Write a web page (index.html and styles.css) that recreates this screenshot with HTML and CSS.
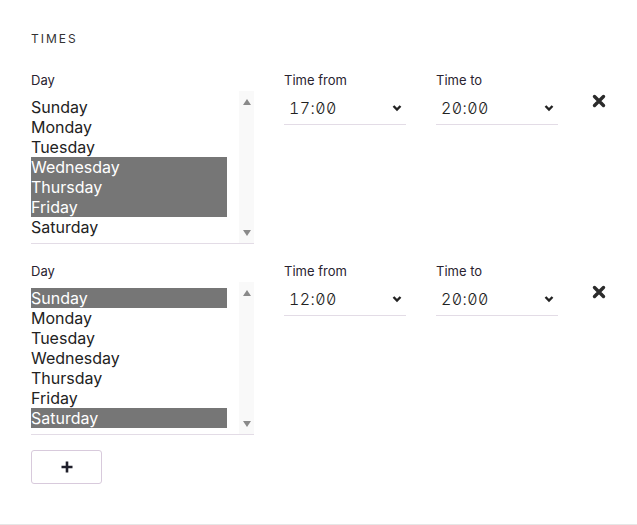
FILE: index.html
```html
<!DOCTYPE html>
<html lang="en">
<head>
<meta charset="utf-8">
<title>Times</title>
<link rel="stylesheet" href="styles.css">
</head>
<body>
<section class="times">
  <h2 class="title">TIMES</h2>
  <div class="rows">
    <div class="row">
      <div class="field field-day">
        <label class="label">Day</label>
        <div class="listbox" role="listbox" aria-multiselectable="true">
          <ul class="options">
            <li class="opt" role="option">Sunday</li>
            <li class="opt" role="option">Monday</li>
            <li class="opt" role="option">Tuesday</li>
            <li class="opt selected" role="option" aria-selected="true">Wednesday</li>
            <li class="opt selected" role="option" aria-selected="true">Thursday</li>
            <li class="opt selected" role="option" aria-selected="true">Friday</li>
            <li class="opt" role="option">Saturday</li>
          </ul>
          <div class="scrollbar"><span class="arrow up"></span><span class="arrow down"></span></div>
        </div>
      </div>
      <div class="field field-time">
        <label class="label">Time from</label>
        <select class="time"><option>17:00</option></select>
      </div>
      <div class="field field-time">
        <label class="label">Time to</label>
        <select class="time"><option>20:00</option></select>
      </div>
      <button class="remove" type="button" aria-label="Remove">
        <svg width="14" height="14" viewBox="0 0 14 14"><path d="M2.5 2.5 L11.5 11.5 M11.5 2.5 L2.5 11.5" stroke="#2b2b2b" stroke-width="3.4" stroke-linecap="round"/></svg>
      </button>
    </div>
    <div class="row">
      <div class="field field-day">
        <label class="label">Day</label>
        <div class="listbox" role="listbox" aria-multiselectable="true">
          <ul class="options">
            <li class="opt selected" role="option" aria-selected="true">Sunday</li>
            <li class="opt" role="option">Monday</li>
            <li class="opt" role="option">Tuesday</li>
            <li class="opt" role="option">Wednesday</li>
            <li class="opt" role="option">Thursday</li>
            <li class="opt" role="option">Friday</li>
            <li class="opt selected" role="option" aria-selected="true">Saturday</li>
          </ul>
          <div class="scrollbar"><span class="arrow up"></span><span class="arrow down"></span></div>
        </div>
      </div>
      <div class="field field-time">
        <label class="label">Time from</label>
        <select class="time"><option>12:00</option></select>
      </div>
      <div class="field field-time">
        <label class="label">Time to</label>
        <select class="time"><option>20:00</option></select>
      </div>
      <button class="remove" type="button" aria-label="Remove">
        <svg width="14" height="14" viewBox="0 0 14 14"><path d="M2.5 2.5 L11.5 11.5 M11.5 2.5 L2.5 11.5" stroke="#2b2b2b" stroke-width="3.4" stroke-linecap="round"/></svg>
      </button>
    </div>
  </div>
  <button class="add" type="button">
    <svg width="12" height="12" viewBox="0 0 12 12"><path d="M6 0.5 V11.5 M0.5 6 H11.5" stroke="#1f1f2a" stroke-width="2.6"/></svg>
  </button>
</section>
</body>
</html>
```
FILE: styles.css
```css
html, body {
  margin: 0;
  padding: 0;
  background: #fff;
}
body {
  font-family: Inter, "Noto Sans", sans-serif;
  color: #222;
}
.times {
  box-sizing: border-box;
  height: 525px;
  padding: 31px 0 0 31px;
  border-bottom: 1px solid #e6e6e6;
}
.title {
  margin: 0 0 24px;
  font-size: 12px;
  line-height: 16px;
  font-weight: 400;
  letter-spacing: 2px;
  color: #333;
}
.rows {
  display: flex;
  flex-direction: column;
  gap: 18px;
}
.row {
  display: flex;
  align-items: flex-start;
  gap: 30px;
}
.field {
  display: flex;
  flex-direction: column;
  flex-shrink: 0;
}
.label {
  font-size: 13px;
  line-height: 18px;
  margin-bottom: 2px;
  color: #2a2330;
}
.field-day { width: 223px; }
.field-time { width: 122px; }
.listbox {
  box-sizing: border-box;
  height: 153px;
  display: grid;
  grid-template-columns: 1fr 15px;
  column-gap: 12px;
  border-bottom: 1px solid #e3dce6;
}
.options {
  list-style: none;
  margin: 0;
  padding: 6px 0 0;
}
.opt {
  height: 20px;
  line-height: 20px;
  font-size: 16px;
  color: #222;
  white-space: nowrap;
}
.opt.selected {
  background: #767676;
  color: #fff;
}
.scrollbar {
  background: #f9f9f9;
  display: flex;
  flex-direction: column;
  justify-content: space-between;
  align-items: center;
  padding: 8px 0 7px;
}
.arrow {
  width: 0;
  height: 0;
  border-left: 4.5px solid transparent;
  border-right: 4.5px solid transparent;
}
.arrow.up {
  border-bottom: 6px solid #8a8a8a;
}
.arrow.down {
  border-top: 6px solid #8a8a8a;
}
.time {
  box-sizing: border-box;
  width: 122px;
  height: 34px;
  margin: 0;
  padding: 0 20px 0 5px;
  border: none;
  border-bottom: 1px solid #e3dce6;
  border-radius: 0;
  outline: none;
  appearance: none;
  -webkit-appearance: none;
  background: #fff url("data:image/svg+xml,%3Csvg xmlns='http://www.w3.org/2000/svg' width='10' height='8' viewBox='0 0 10 8'%3E%3Cpath d='M1.5 2 L5 5.5 L8.5 2' fill='none' stroke='%23222' stroke-width='2.4'/%3E%3C/svg%3E") no-repeat right 4px center;
  font-family: Inter, "Noto Sans", sans-serif;
  font-size: 16px;
  font-weight: 300;
  font-variant-numeric: tabular-nums slashed-zero;
  font-feature-settings: "tnum" 1, "zero" 1;
  letter-spacing: 0.4px;
  color: #222;
}
.remove {
  flex-shrink: 0;
  margin: 20px 0 0 0;
  padding: 0;
  width: 22px;
  height: 20px;
  border: none;
  background: none;
  display: flex;
  align-items: center;
  justify-content: center;
}
.add {
  display: flex;
  align-items: center;
  justify-content: center;
  margin-top: 15px;
  width: 71px;
  height: 34px;
  padding: 0;
  border: 1px solid #d8cadc;
  border-radius: 3px;
  background: #fff;
}
```
